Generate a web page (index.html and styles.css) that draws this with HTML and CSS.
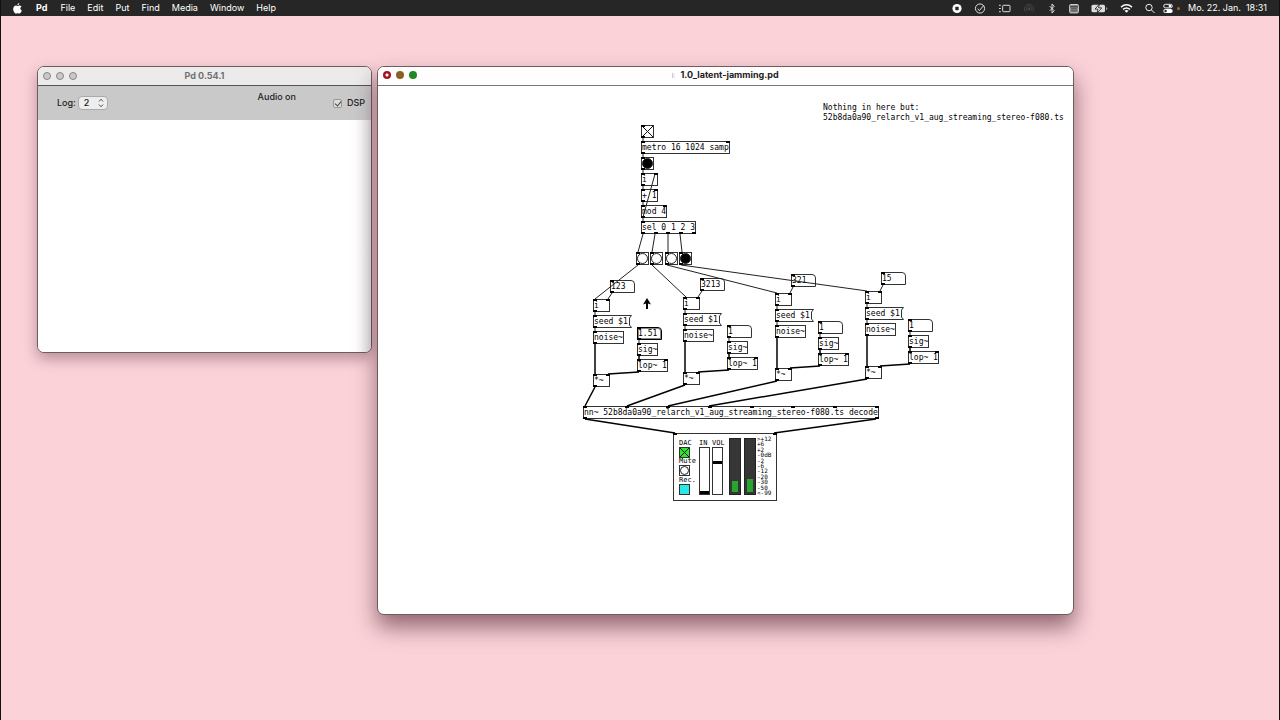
FILE: index.html
```html
<!DOCTYPE html>
<html lang="en">
<head>
<meta charset="utf-8">
<title>Pd desktop</title>
<link rel="stylesheet" href="styles.css">
</head>
<body>
<header class="menubar">
  <nav class="menus">
    <svg class="apple" viewBox="0 0 20 24" aria-label="Apple"><path d="M14 0c.2 2.600-2 5-4.300 5C9.500 2.600 11.700.4 14 0zM10.200 6.300c1 0 2.300-1.200 4.400-1.200 1.800.1 3.400 1 4.300 2.400-3.800 2.300-3.200 7.500.7 9-.9 2.700-3.100 6.800-5.500 6.800-1.500 0-2-1-3.900-1-1.800 0-2.500 1-3.900 1C3.500 23.300.4 17.600.4 13.300.4 8.600 3.300 5.300 6.600 5.200c1.600 0 2.700 1.100 3.600 1.100z" fill="#fff"/></svg>
    <a class="app" href="#">Pd</a><a href="#">File</a><a href="#">Edit</a><a href="#">Put</a><a href="#">Find</a><a href="#">Media</a><a href="#">Window</a><a href="#">Help</a>
  </nav>
  <div class="status">
    <svg class="s10" viewBox="0 0 10 10"><circle cx="5" cy="5" r="4.600" fill="#fff"/><rect x="3.300" y="3.300" width="3.400" height="3.400" rx=".6" fill="#262626"/></svg>
    <svg class="s12" viewBox="0 0 12 12"><circle cx="6" cy="6" r="5" class="line"/><path d="M3.500 6.200l1.800 2.100L10 2.800" class="line"/></svg>
    <svg class="s13" viewBox="0 0 13 12"><rect x="4.500" y="2.500" width="8" height="7" rx="1" class="line"/><path d="M.5 2.500h2M.5 6h2M.5 9.500h2" class="line"/></svg>
    <svg class="s12 dim" viewBox="0 0 12 12"><path d="M2.500 10A5 5 0 1 1 9.500 10M4 8.500a3 3 0 1 1 4 0" class="line"/><circle cx="6" cy="6.500" r="1.500" fill="#fff"/></svg>
    <svg class="s10" viewBox="0 0 10 12"><path d="M2.500 3.500l5 5L5 11V1l2.500 2.500-5 5" class="line"/></svg>
    <svg class="s10" viewBox="0 0 10 10"><rect x=".6" y="1" width="8.800" height="8.400" rx="1.200" fill="#888" stroke="#ccc"/><path d="M1 3.300h8" stroke="#333"/><path d="M2.500 5.200h5M2.500 7.300h5" stroke="#333" stroke-dasharray="1.200 .7"/></svg>
    <svg class="s16" viewBox="0 0 17 10"><rect x=".5" y="1.200" width="13.500" height="7.600" rx="1.500" fill="#ddd"/><path d="M15 3.500v3q1.300-.5 1.300-1.500T15 3.500z" fill="#999"/><path d="M8.500.5L4 5.600h3L6 9.800l4.700-5.400H7.500z" fill="#fff" stroke="#262626" stroke-width=".9"/></svg>
    <svg class="s13" viewBox="0 0 13 10"><path d="M1 3.600q5.500-4.600 11 0M3 5.900q3.500-2.900 7 0" class="wifi"/><path d="M4.500 7.200q2-1.500 4 0l-2 2z" fill="#fff"/></svg>
    <svg class="s10" viewBox="0 0 10 10"><circle cx="4" cy="4" r="3.200" class="line"/><path d="M6.400 6.400L9.500 9.500" class="line"/></svg>
    <svg class="s10 control" viewBox="0 0 10 10"><rect x=".7" y=".8" width="8.600" height="3.600" rx="1.800" class="line"/><rect x=".3" y="5.400" width="9.400" height="4.200" rx="2.100" fill="#fff"/><circle cx="7" cy="2.600" r="1.400" fill="#fff"/><circle cx="2.600" cy="7.500" r="1.200" fill="#262626"/></svg>
    <span class="dot"></span>
    <time>Mo. 22. Jan.&nbsp; 18:31</time>
  </div>
</header>

<main class="desktop">
  <section class="window log-window">
    <div class="titlebar inactive">
      <div class="lights"><button aria-label="Close"></button><button aria-label="Minimise"></button><button aria-label="Zoom"></button></div>
      <h1>Pd 0.54.1</h1>
    </div>
    <div class="toolbar">
      <label for="log">Log:</label>
      <span class="picker"><select id="log"><option>2</option></select><svg viewBox="0 0 6 10"><path d="M1 3.500l2-2.300 2 2.300M1 6.500l2 2.300 2-2.300" fill="none" stroke="#555"/></svg></span>
      <span class="audio">Audio on</span>
      <label class="dsp"><input type="checkbox" checked>DSP</label>
    </div>
    <div class="log-body"></div>
  </section>

  <section class="window patch-window">
    <div class="titlebar active-bar">
      <div class="lights"><button class="close" aria-label="Close"></button><button class="mini" aria-label="Minimise"></button><button class="zoom" aria-label="Zoom"></button></div>
      <h1><span class="doc"></span>1.0_latent-jamming.pd</h1>
    </div>
    <div class="canvas" id="canvas">
      <svg class="wires" id="wires"></svg>
      <div class="node panel" id="dac">
        <i class="ports in"><b></b><b></b></i>
        <div class="switches">
          <label for="on">DAC</label><input class="toggle green" id="on" type="checkbox" checked>
          <label class="tight" for="mute">Mute</label><button class="bang" id="mute"></button>
          <label for="rec">Rec.</label><input class="toggle cyan" id="rec" type="checkbox">
        </div>
        <div class="fader"><label for="in">IN</label><input id="in" type="range" min="0" max="100" value="0"></div>
        <div class="fader"><label for="vol">VOL</label><input id="vol" type="range" min="0" max="100" value="70"></div>
        <div class="vu"><span style="height:11px"></span></div>
        <div class="vu"><span style="height:13px"></span></div>
        <div class="scale"><span>&gt;+12</span><span>+6</span><span>+2</span><span>-0dB</span><span>-2</span><span>-6</span><span>-12</span><span>-20</span><span>-30</span><span>-50</span><span>&lt;-99</span></div>
      </div>
      <svg class="cursor" viewBox="0 0 8 11"><path d="M4 0L8 6.500 5 5.500V11H3V5.500L0 6.500z"/></svg>
    </div>
  </section>
</main>
<script src="patch.js"></script>
</body>
</html>
```

FILE: styles.css
```css
* { box-sizing: border-box; }
body {
  margin: 0;
  min-height: 100vh;
  display: flex;
  flex-direction: column;
  background: #fad2d8;
  border: solid #111;
  border-width: 0 1px;
  font: 9px/12px Inter, sans-serif;
  color: #222;
  overflow: hidden;
}
button, input, select { font: inherit; color: inherit; margin: 0; padding: 0; border: 0; appearance: none; }
.menubar {
  display: flex;
  justify-content: space-between;
  align-items: center;
  height: 16px;
  padding: 0 12px;
  background: #262626;
  color: #fff;
}
.menus, .status { display: flex; align-items: center; }
.menus { gap: 12px; }
.menus a { color: inherit; text-decoration: none; }
.menus .app { font-weight: 700; margin-right: 1px; }
.apple { width: 9px; height: 11px; margin-right: 2px; }
.status { gap: 12px; }
.status svg { height: 11px; }
.s10 { width: 10px; }
.s12 { width: 12px; }
.s13 { width: 13px; }
.s16 { width: 17px; }
.control { margin-left: -4px; }
.dim { opacity: .15; }
.line { fill: none; stroke: #eee; stroke-width: 1; }
.wifi { fill: none; stroke: #fff; stroke-width: 1.4; }
.dot { width: 3px; height: 3px; border-radius: 50%; background: #a66a20; margin-left: -8px; margin-right: -4px; }

.desktop { position: relative; flex: 1; }
.window {
  position: absolute;
  display: flex;
  flex-direction: column;
  border: 1px solid #6b5c60;
  border-radius: 7px;
  background: #fff;
  overflow: hidden;
}
.log-window { left: 36px; top: 50px; width: 335px; height: 287px; box-shadow: 0 6px 14px rgba(70, 20, 35, .35); }
.patch-window { left: 376px; top: 50px; width: 697px; height: 549px; box-shadow: 0 12px 22px rgba(60, 15, 30, .55); }
.titlebar {
  position: relative;
  display: flex;
  align-items: center;
  justify-content: center;
  height: 19px;
  border-bottom: 1px solid #777;
  background: #fffdfd;
}
.active-bar { padding-bottom: 2px; }
.titlebar h1 { margin: 0; font-size: 9px; font-weight: 700; display: flex; align-items: center; gap: 5px; }
.inactive { background: #eceaea; border-color: #555; }
.inactive h1 { color: #707070; }
.lights { position: absolute; left: 5px; display: flex; gap: 5px; }
.lights button { width: 8px; height: 8px; border-radius: 50%; background: #c9c9c9; border: 1px solid #858585; }
.lights .close { background: radial-gradient(circle, #fff 0 1px, #a3141f 2px); border: 0; }
.lights .mini { background: #8a6120; border: 0; }
.lights .zoom { background: #1d8a22; border: 0; }
.doc { width: 3px; height: 5px; background: #eee; border-left: 1px solid #ccc; }

.toolbar {
  display: flex;
  align-items: center;
  height: 34px;
  padding: 0 6px 0 19px;
  gap: 2px;
  background: #c9c9c9;
  font-weight: 500;
}
.picker { position: relative; display: flex; }
.picker select { width: 30px; height: 14px; padding-left: 5px; background: #eee; border: 1px solid #aaa; border-radius: 4px; }
.picker svg { position: absolute; right: 4px; top: 2px; width: 6px; height: 10px; }
.audio { margin-left: auto; padding-bottom: 12px; }
.dsp { display: flex; align-items: center; gap: 5px; margin-left: 35px; }
.dsp input { width: 9px; height: 9px; border: 1px solid #999; border-radius: 2px; background: #ddd; position: relative; }
.dsp input::after { content: ""; position: absolute; left: 2px; top: 0; width: 3px; height: 5px; border: solid #444; border-width: 0 1px 1px 0; transform: rotate(40deg); }
.log-body { flex: 1; background: linear-gradient(90deg, #fff calc(100% - 16px), #f6f6f6 calc(100% - 9px), #e2e5e6); }

.canvas { position: relative; flex: 1; font: 8px/9px "DejaVu Sans Mono", monospace; color: #000; }
.wires { position: absolute; inset: 0; width: 100%; height: 100%; z-index: 2; pointer-events: none; }
.wires line { stroke: #222; stroke-width: 1; }
.wires .signal { stroke: #000; stroke-width: 1.5; }
.node { position: absolute; background: #fff; border: 1px solid #333; white-space: pre; }
.object, .message, .number { height: 13px; padding: 1px 0; }
.object { min-width: 17px; }
.comment { border: 0; line-height: 10px; }
.message { border-right: 0; padding-right: 4px; }
.message svg { position: absolute; right: 0; top: -1px; width: 4px; height: 13px; background: #fff; }
.number { width: 25px; border-top-right-radius: 4px; }
.number input { display: block; width: 100%; height: 9px; background: none; outline: 0; }
.active { border-color: #000; box-shadow: inset 0 0 0 1px #888; }
.ports { position: absolute; left: -1px; right: -1px; height: 2px; display: flex; justify-content: space-between; z-index: 1; }
.ports b { width: 4px; background: #000; }
.in { top: -1px; }
.out { bottom: -1px; }
.square { width: 13px; height: 13px; }
.toggle, .bang { display: block; width: 11px; height: 11px; background: #fff; position: relative; }
.toggle:checked {
  background-image:
    linear-gradient(45deg, transparent 47%, #111 47% 53%, transparent 53%),
    linear-gradient(-45deg, transparent 47%, #111 47% 53%, transparent 53%);
}
.bang::after { content: ""; position: absolute; inset: 0; border: 1px solid #222; border-radius: 50%; }
.lit::after { background: #000; }

.panel { display: flex; height: 68px; width: 104px; padding: 4px 3px 4px 5px; font-size: 7px; line-height: 8px; }
.switches { width: 20px; display: flex; flex-direction: column; padding-top: 1px; }
.switches .toggle, .switches .bang { border: 1px solid #333; flex: none; }
.switches .tight { line-height: 7px; }
.switches .green { background-color: #29e62c; }
.switches .cyan { background-color: #28e8ea; }
.fader { width: 13px; display: flex; flex-direction: column; padding-top: 1px; }
.fader input { writing-mode: vertical-lr; direction: rtl; width: 11px; height: 48px; border: 1px solid #333; background: #fff; }
.fader input::-webkit-slider-thumb { appearance: none; width: 9px; height: 3px; background: #000; }
.vu { width: 12px; height: 57px; margin-left: 4px; padding: 2px; background: #363636; border: 1px solid #222; display: flex; align-items: flex-end; }
.vu + .vu { margin-left: 3px; }
.vu span { flex: 1; background: #27a52c; }
.scale { display: flex; flex-direction: column; justify-content: space-between; height: 59px; font-size: 6px; margin: -2px 0 0 1px; }
.scale span { line-height: 5px; }
.cursor { position: absolute; left: 265px; top: 212px; width: 8px; height: 11px; z-index: 3; }
```

FILE: patch.js
```js
// Patch coordinates are in screen space; ORIGIN is the canvas corner.
const ORIGIN = { x: 378, y: 86 };
const canvas = document.getElementById("canvas");
const wires = document.getElementById("wires");

// kind, x, y, text, inlets, outlets
const nodes = [
  ["toggle", 641, 125, "on", 1, 1],
  ["object", 641, 141, "metro 16 1024 samp", 2, 1],
  ["bang", 641, 157, "lit", 1, 1],
  ["object", 641, 173, "i", 2, 1],
  ["object", 641, 189, "+ 1", 2, 1],
  ["object", 641, 205, "mod 4", 2, 1],
  ["object", 641, 221, "sel 0 1 2 3", 1, 5],
  ["bang", 636, 252, "", 1, 1],
  ["bang", 650, 252, "", 1, 1],
  ["bang", 665, 252, "", 1, 1],
  ["bang", 679, 252, "lit", 1, 1],
  ["object", 583, 406, "nn~ 52b8da0a90_relarch_v1_aug_streaming_stereo-f080.ts decode", 8, 2],
  ["comment", 823, 103, "Nothing in here but:\n52b8da0a90_relarch_v1_aug_streaming_stereo-f080.ts", 0, 0],
];

// x1, y1, x2, y2, signal
const lines = [
  [643, 138, 643, 141], [643, 154, 643, 157], [643, 170, 643, 173],
  [643, 186, 643, 189], [643, 202, 643, 205], [643, 218, 643, 221],
  [643, 217, 655, 174],
  [643, 234, 638, 252], [655, 234, 652, 252], [668, 234, 668, 252], [680, 234, 682, 252],
  [638, 265, 595, 299], [652, 265, 686, 297], [667, 265, 777, 293], [681, 265, 867, 291],
  [585, 419, 675, 433, 1], [876, 419, 774, 433, 1],
];

// voice column: x, top of "i", number box, amp column x, amp text, seed, nn~ inlet x
const voices = [
  [593, 299, 610, 280, 637, "1.51", "123", 585],
  [683, 297, 700, 278, 727, "1", "3213", 627],
  [775, 293, 791, 274, 818, "1", "321", 668],
  [865, 291, 881, 272, 908, "1", "15", 709],
];
voices.forEach(([x, y, nx, ny, ax, amp, seed, inlet]) => {
  nodes.push(
    ["number", nx, ny, seed, 1, 1],
    ["object", x, y, "i", 2, 1],
    ["message", x, y + 16, "seed $1", 1, 1],
    ["object", x, y + 32, "noise~", 1, 1],
    ["object", x, y + 75, "*~", 2, 1],
    [amp === "1.51" ? "number active" : "number", ax, y + 28, amp, 1, 1],
    ["object", ax, y + 44, "sig~", 1, 1],
    ["object", ax, y + 60, "lop~ 1", 2, 1],
  );
  lines.push(
    [nx + 2, ny + 13, x + 15, y],
    [x + 2, y + 13, x + 2, y + 16], [x + 2, y + 29, x + 2, y + 32],
    [x + 2, y + 45, x + 2, y + 75, 1],
    [ax + 2, y + 41, ax + 2, y + 44], [ax + 2, y + 57, ax + 2, y + 60, 1],
    [ax + 2, y + 73, x + 15, y + 75, 1],
    [x + 2, y + 88, inlet, 406, 1],
  );
});

const ports = (side, count) =>
  count ? `<i class="ports ${side}">${"<b></b>".repeat(count)}</i>` : "";

function body(kind, text) {
  if (kind === "toggle") return '<input class="toggle" type="checkbox" checked aria-label="Metro on">';
  if (kind === "bang") return `<button class="bang ${text}" aria-label="Bang"></button>`;
  if (kind.startsWith("number")) return `<input type="text" value="${text}" aria-label="Number">`;
  if (kind === "message") return text + '<svg viewBox="0 0 4 13"><path d="M0 .5H3.500L1.500 3V10L3.500 12.500H0" fill="none" stroke="#333"/></svg>';
  return text.replace("<", "&lt;");
}

nodes.forEach(([kind, x, y, text, ins, outs]) => {
  const el = document.createElement("div");
  el.className = "node " + (kind === "toggle" || kind === "bang" ? "square" : kind);
  el.style.left = x - ORIGIN.x + "px";
  el.style.top = y - ORIGIN.y + "px";
  el.innerHTML = body(kind, text) + ports("in", ins) + ports("out", outs);
  canvas.append(el);
});

const dac = document.getElementById("dac");
dac.style.left = 673 - ORIGIN.x + "px";
dac.style.top = 433 - ORIGIN.y + "px";

lines.forEach(([x1, y1, x2, y2, signal]) => {
  const l = document.createElementNS("http://www.w3.org/2000/svg", "line");
  l.setAttribute("x1", x1 - ORIGIN.x);
  l.setAttribute("y1", y1 - ORIGIN.y);
  l.setAttribute("x2", x2 - ORIGIN.x);
  l.setAttribute("y2", y2 - ORIGIN.y);
  if (signal) l.setAttribute("class", "signal");
  wires.append(l);
});
```
